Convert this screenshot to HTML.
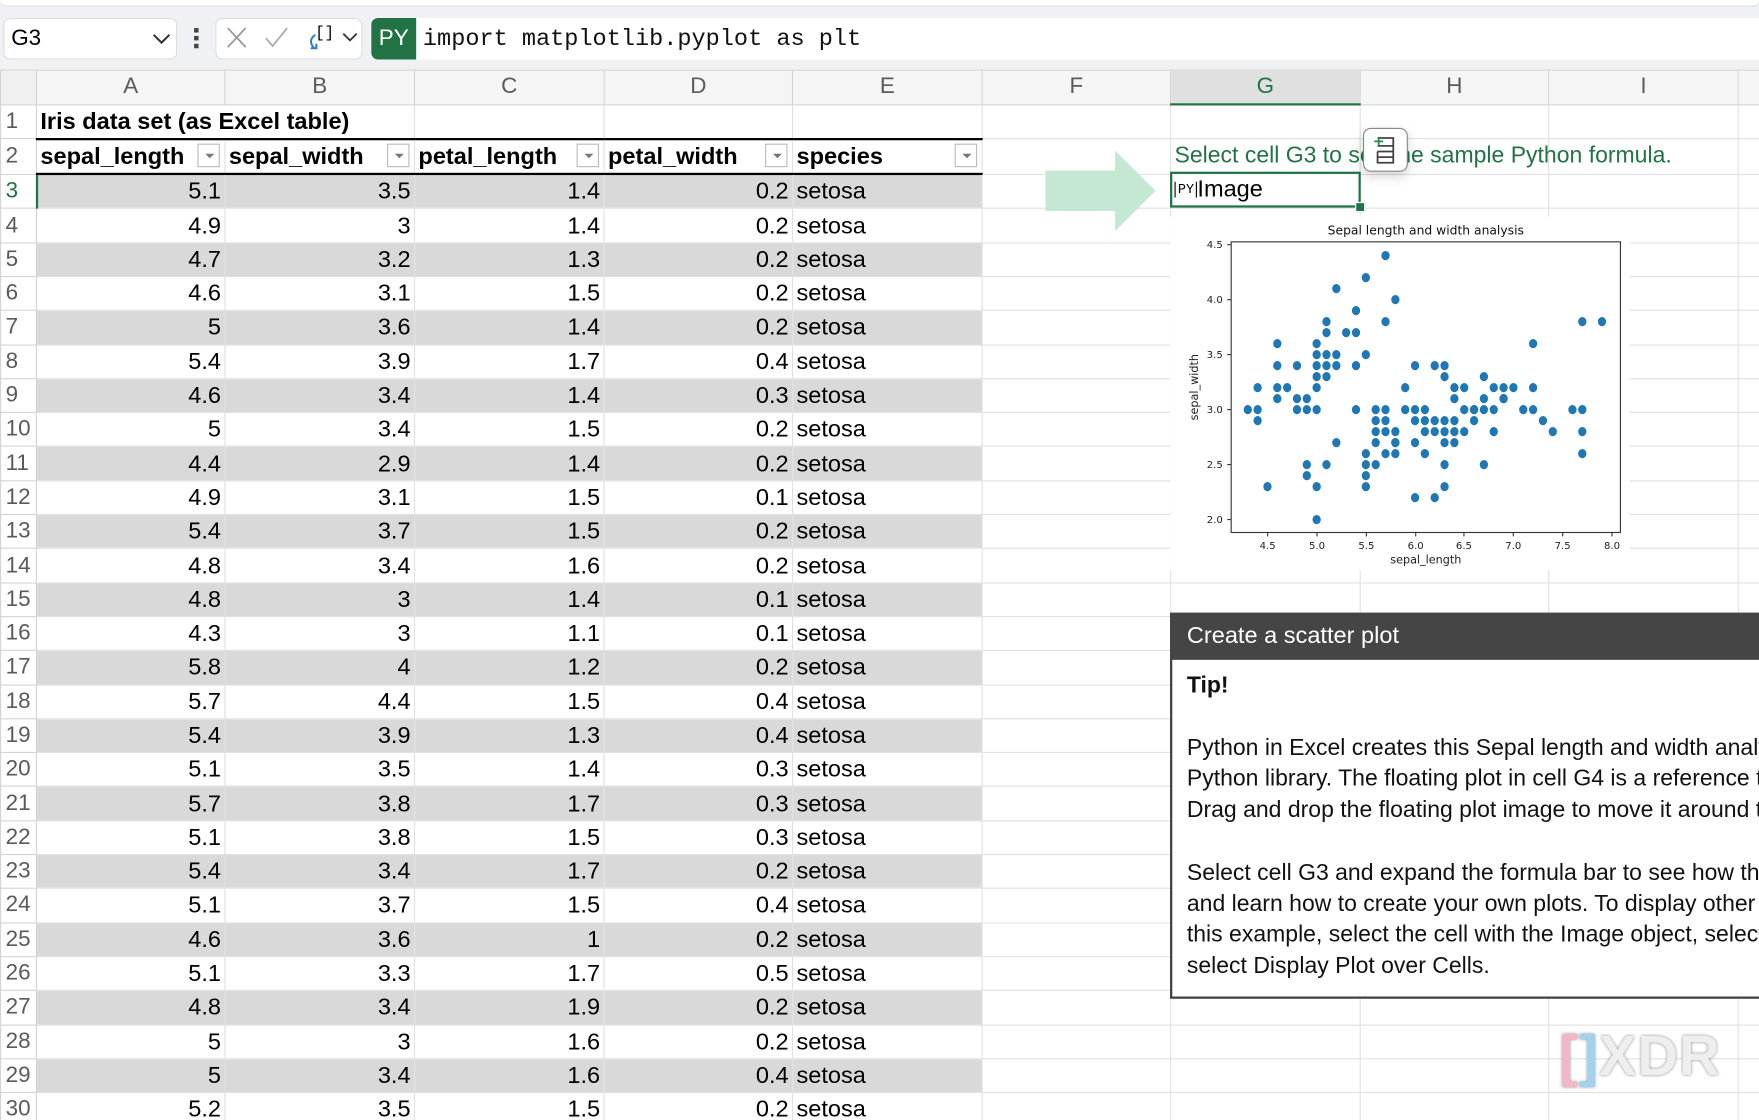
<!DOCTYPE html>
<html><head><meta charset="utf-8"><style>
html,body{margin:0;padding:0;background:#fff;overflow:hidden;}
#wrap{position:absolute;left:0;top:0;width:1568px;height:998px;transform:scale(1.1218,1.1222);transform-origin:0 0;background:#f0f1f4;overflow:hidden;font-family:"Liberation Sans Narrow","Liberation Sans",sans-serif;}
.abs{position:absolute;}
table{border-collapse:collapse;table-layout:fixed;position:absolute;left:0;top:62px;background:#fff;width:1589px;}
td{border:1px solid #e1e1e1;height:29.3px;padding:0 3px;font-size:21px;line-height:29px;white-space:nowrap;overflow:hidden;color:#000;}
td.h{color:#5a5a5a;text-align:left;padding-left:4px;font-size:20px;border-color:#d4d4d4;background:#fff;}
tr.ch td{background:#f5f5f5;text-align:center;color:#5a5a5a;font-size:20px;height:29px;border-color:#d4d4d4;}
td.n{text-align:right;}
tr.s td.t{background:#d9d9d9;}
tr.hd td.t{font-weight:bold;border-bottom:2px solid #000;border-top:2px solid #000;position:relative;}
.fb{position:absolute;right:4px;top:3px;width:20px;height:21px;border:1px solid #bbb;background:#fff;box-sizing:border-box;}
.fb:after{content:"";position:absolute;left:6px;top:8px;border-left:4px solid transparent;border-right:4px solid transparent;border-top:4px solid #777;}
</style></head><body><div id="wrap">
<div class="abs" style="left:0;top:0;width:1568px;height:5px;background:#fff;border-bottom:1px solid #dcdcdc;border-radius:0 0 8px 8px"></div>
<div class="abs" style="left:3px;top:16px;width:155px;height:37px;background:#fff;border:1px solid #dedede;border-radius:6px;box-sizing:border-box;font-family:'Liberation Sans',sans-serif;font-size:20px;line-height:35px;padding-left:6px">G3</div>
<svg class="abs" style="left:134px;top:26px" width="20" height="16"><path d="M3 5 L10 12 L17 5" stroke="#333" stroke-width="1.8" fill="none"/></svg>
<div class="abs" style="left:173px;top:25px;width:5px;height:20px"><div style="width:4px;height:4px;background:#444;margin-bottom:3px"></div><div style="width:4px;height:4px;background:#444;margin-bottom:3px"></div><div style="width:4px;height:4px;background:#444"></div></div>
<div class="abs" style="left:192px;top:16px;width:131px;height:37px;background:#fff;border:1px solid #dedede;border-radius:6px;box-sizing:border-box"></div>
<svg class="abs" style="left:192px;top:16px" width="131" height="37"><path d="M11 9 L27 26 M27 9 L11 26" stroke="#999" stroke-width="1.6"/><path d="M45 18 L51 25 L64 9" stroke="#aaa" stroke-width="1.6" fill="none"/><path d="M89 15 Q82 20 88 27 M85 27 L90 27 L90 23" stroke="#2b7cd3" stroke-width="1.8" fill="none"/><text x="89" y="17" font-family="Liberation Mono" font-size="14">[]</text><path d="M114 14 L120 20 L126 14" stroke="#333" stroke-width="1.6" fill="none"/></svg>
<div class="abs" style="left:331px;top:16px;width:1240px;height:37px;background:#fff;border-radius:6px 0 0 6px"></div>
<div class="abs" style="left:331px;top:16px;width:40px;height:37px;background:#217346;color:#fff;font-family:'Liberation Sans',sans-serif;font-size:20px;line-height:37px;text-align:center;border-radius:6px 0 0 6px">PY</div>
<div class="abs" style="left:377px;top:17px;font-family:'Liberation Mono',monospace;font-size:21px;line-height:37px;color:#111">import matplotlib.pyplot as plt</div>

<table>
<colgroup><col style="width:32px"><col style="width:168px"><col style="width:169px"><col style="width:169px"><col style="width:168px"><col style="width:169px"><col style="width:168px"><col style="width:169px"><col style="width:168px"><col style="width:169px"><col style="width:40px"></colgroup>
<tr class="ch"><td style="background:#f0f0f0"></td><td>A</td><td>B</td><td>C</td><td>D</td><td>E</td><td>F</td><td style="background:#e0e0e0;color:#217346;border-bottom:2px solid #217346">G</td><td>H</td><td>I</td><td></td></tr>
<tr><td class="h">1</td><td colspan="2" style="font-weight:bold;border-right-color:#e1e1e1">Iris data set (as Excel table)</td><td></td><td></td><td></td><td></td><td></td><td></td><td></td><td></td></tr>
<tr class="hd"><td class="h">2</td><td class="t">sepal_length<span class="fb"></span></td><td class="t">sepal_width<span class="fb"></span></td><td class="t">petal_length<span class="fb"></span></td><td class="t">petal_width<span class="fb"></span></td><td class="t">species<span class="fb"></span></td><td></td><td></td><td></td><td></td><td></td></tr>
<tr class="s"><td class="h" style="color:#217346;border-right:2px solid #217346">3</td><td class="t n">5.1</td><td class="t n">3.5</td><td class="t n">1.4</td><td class="t n">0.2</td><td class="t">setosa</td><td></td><td></td><td></td><td></td><td></td></tr>
<tr><td class="h">4</td><td class="t n">4.9</td><td class="t n">3</td><td class="t n">1.4</td><td class="t n">0.2</td><td class="t">setosa</td><td></td><td></td><td></td><td></td><td></td></tr>
<tr class="s"><td class="h">5</td><td class="t n">4.7</td><td class="t n">3.2</td><td class="t n">1.3</td><td class="t n">0.2</td><td class="t">setosa</td><td></td><td></td><td></td><td></td><td></td></tr>
<tr><td class="h">6</td><td class="t n">4.6</td><td class="t n">3.1</td><td class="t n">1.5</td><td class="t n">0.2</td><td class="t">setosa</td><td></td><td></td><td></td><td></td><td></td></tr>
<tr class="s"><td class="h">7</td><td class="t n">5</td><td class="t n">3.6</td><td class="t n">1.4</td><td class="t n">0.2</td><td class="t">setosa</td><td></td><td></td><td></td><td></td><td></td></tr>
<tr><td class="h">8</td><td class="t n">5.4</td><td class="t n">3.9</td><td class="t n">1.7</td><td class="t n">0.4</td><td class="t">setosa</td><td></td><td></td><td></td><td></td><td></td></tr>
<tr class="s"><td class="h">9</td><td class="t n">4.6</td><td class="t n">3.4</td><td class="t n">1.4</td><td class="t n">0.3</td><td class="t">setosa</td><td></td><td></td><td></td><td></td><td></td></tr>
<tr><td class="h">10</td><td class="t n">5</td><td class="t n">3.4</td><td class="t n">1.5</td><td class="t n">0.2</td><td class="t">setosa</td><td></td><td></td><td></td><td></td><td></td></tr>
<tr class="s"><td class="h">11</td><td class="t n">4.4</td><td class="t n">2.9</td><td class="t n">1.4</td><td class="t n">0.2</td><td class="t">setosa</td><td></td><td></td><td></td><td></td><td></td></tr>
<tr><td class="h">12</td><td class="t n">4.9</td><td class="t n">3.1</td><td class="t n">1.5</td><td class="t n">0.1</td><td class="t">setosa</td><td></td><td></td><td></td><td></td><td></td></tr>
<tr class="s"><td class="h">13</td><td class="t n">5.4</td><td class="t n">3.7</td><td class="t n">1.5</td><td class="t n">0.2</td><td class="t">setosa</td><td></td><td></td><td></td><td></td><td></td></tr>
<tr><td class="h">14</td><td class="t n">4.8</td><td class="t n">3.4</td><td class="t n">1.6</td><td class="t n">0.2</td><td class="t">setosa</td><td></td><td></td><td></td><td></td><td></td></tr>
<tr class="s"><td class="h">15</td><td class="t n">4.8</td><td class="t n">3</td><td class="t n">1.4</td><td class="t n">0.1</td><td class="t">setosa</td><td></td><td></td><td></td><td></td><td></td></tr>
<tr><td class="h">16</td><td class="t n">4.3</td><td class="t n">3</td><td class="t n">1.1</td><td class="t n">0.1</td><td class="t">setosa</td><td></td><td></td><td></td><td></td><td></td></tr>
<tr class="s"><td class="h">17</td><td class="t n">5.8</td><td class="t n">4</td><td class="t n">1.2</td><td class="t n">0.2</td><td class="t">setosa</td><td></td><td></td><td></td><td></td><td></td></tr>
<tr><td class="h">18</td><td class="t n">5.7</td><td class="t n">4.4</td><td class="t n">1.5</td><td class="t n">0.4</td><td class="t">setosa</td><td></td><td></td><td></td><td></td><td></td></tr>
<tr class="s"><td class="h">19</td><td class="t n">5.4</td><td class="t n">3.9</td><td class="t n">1.3</td><td class="t n">0.4</td><td class="t">setosa</td><td></td><td></td><td></td><td></td><td></td></tr>
<tr><td class="h">20</td><td class="t n">5.1</td><td class="t n">3.5</td><td class="t n">1.4</td><td class="t n">0.3</td><td class="t">setosa</td><td></td><td></td><td></td><td></td><td></td></tr>
<tr class="s"><td class="h">21</td><td class="t n">5.7</td><td class="t n">3.8</td><td class="t n">1.7</td><td class="t n">0.3</td><td class="t">setosa</td><td></td><td></td><td></td><td></td><td></td></tr>
<tr><td class="h">22</td><td class="t n">5.1</td><td class="t n">3.8</td><td class="t n">1.5</td><td class="t n">0.3</td><td class="t">setosa</td><td></td><td></td><td></td><td></td><td></td></tr>
<tr class="s"><td class="h">23</td><td class="t n">5.4</td><td class="t n">3.4</td><td class="t n">1.7</td><td class="t n">0.2</td><td class="t">setosa</td><td></td><td></td><td></td><td></td><td></td></tr>
<tr><td class="h">24</td><td class="t n">5.1</td><td class="t n">3.7</td><td class="t n">1.5</td><td class="t n">0.4</td><td class="t">setosa</td><td></td><td></td><td></td><td></td><td></td></tr>
<tr class="s"><td class="h">25</td><td class="t n">4.6</td><td class="t n">3.6</td><td class="t n">1</td><td class="t n">0.2</td><td class="t">setosa</td><td></td><td></td><td></td><td></td><td></td></tr>
<tr><td class="h">26</td><td class="t n">5.1</td><td class="t n">3.3</td><td class="t n">1.7</td><td class="t n">0.5</td><td class="t">setosa</td><td></td><td></td><td></td><td></td><td></td></tr>
<tr class="s"><td class="h">27</td><td class="t n">4.8</td><td class="t n">3.4</td><td class="t n">1.9</td><td class="t n">0.2</td><td class="t">setosa</td><td></td><td></td><td></td><td></td><td></td></tr>
<tr><td class="h">28</td><td class="t n">5</td><td class="t n">3</td><td class="t n">1.6</td><td class="t n">0.2</td><td class="t">setosa</td><td></td><td></td><td></td><td></td><td></td></tr>
<tr class="s"><td class="h">29</td><td class="t n">5</td><td class="t n">3.4</td><td class="t n">1.6</td><td class="t n">0.4</td><td class="t">setosa</td><td></td><td></td><td></td><td></td><td></td></tr>
<tr><td class="h">30</td><td class="t n">5.2</td><td class="t n">3.5</td><td class="t n">1.5</td><td class="t n">0.2</td><td class="t">setosa</td><td></td><td></td><td></td><td></td><td></td></tr>
</table>

<svg class="abs" style="left:930px;top:134px" width="102" height="72"><path d="M2 18 H64 V0 L100 36 L64 72 V54 H2 Z" fill="#c4e8d3"/></svg>
<div class="abs" style="left:1047px;top:124px;font-family:'Liberation Sans',sans-serif;font-size:20.5px;line-height:30px;color:#217346;white-space:nowrap">Select cell G3 to see the sample Python formula.</div>
<div class="abs" style="left:1043px;top:153px;width:170px;height:32px;border:2px solid #217346;box-sizing:border-box;background:#fff"></div>
<div class="abs" style="left:1208px;top:180px;width:7px;height:7px;background:#217346;border:1px solid #fff"></div>
<div class="abs" style="left:1047px;top:154px;font-size:21px;line-height:30px;white-space:nowrap"><span style="font-family:'Liberation Mono';font-size:12px;border-left:1.5px solid #000;border-right:1.5px solid #000;padding:0 2px;position:relative;top:-3px">PY</span><span style="font-family:'Liberation Sans';font-size:21px">Image</span></div>
<div class="abs" style="left:1215px;top:114px;width:40px;height:39px;background:#fff;border:1px solid #888;border-radius:7px;box-sizing:border-box;box-shadow:0 4px 10px rgba(0,0,0,.18)"><svg width="40" height="39"><path d="M12 8 H26 V30 H12 V20 M12 15 H26 M12 20 H26 M12 25 H26" stroke="#444" stroke-width="1.6" fill="none"/><path d="M9 11 H17 M13 7 V15" stroke="#2a8a4a" stroke-width="1.6"/></svg></div>

<svg class="abs" style="left:1043px;top:193px" width="410" height="315" font-family="DejaVu Sans,sans-serif">
<rect x="0" y="0" width="410" height="315" fill="#fff"/>
<text x="228" y="16" font-size="11" text-anchor="middle" fill="#111">Sepal length and width analysis</text>
<rect x="54.5" y="22.5" width="347" height="259" fill="none" stroke="#333" stroke-width="1"/>
<g font-size="9" fill="#222" text-anchor="end">
<text x="47" y="28">4.5</text><text x="47" y="77">4.0</text><text x="47" y="126">3.5</text><text x="47" y="175">3.0</text><text x="47" y="224">2.5</text><text x="47" y="273">2.0</text></g>
<g stroke="#333"><path d="M51 25H54M51 74H54M51 123H54M51 172H54M51 221H54M51 270H54M87 282V285M131 282V285M175 282V285M219 282V285M262 282V285M306 282V285M350 282V285M394 282V285"/></g>
<g font-size="9" fill="#222" text-anchor="middle"><text x="87" y="296">4.5</text><text x="131" y="296">5.0</text><text x="175" y="296">5.5</text><text x="219" y="296">6.0</text><text x="262" y="296">6.5</text><text x="306" y="296">7.0</text><text x="350" y="296">7.5</text><text x="394" y="296">8.0</text></g>
<text x="228" y="309" font-size="10" text-anchor="middle" fill="#222">sepal_length</text>
<text transform="translate(25 152) rotate(-90)" font-size="10" text-anchor="middle" fill="#222">sepal_width</text>
<g transform="matrix(87.7 0 0 -98 -307.8 466)" fill="#1f77b4">
<circle cx="5.1" cy="3.5" r="0.042"/><circle cx="4.9" cy="3" r="0.042"/><circle cx="4.7" cy="3.2" r="0.042"/><circle cx="4.6" cy="3.1" r="0.042"/><circle cx="5" cy="3.6" r="0.042"/><circle cx="5.4" cy="3.9" r="0.042"/><circle cx="4.6" cy="3.4" r="0.042"/><circle cx="5" cy="3.4" r="0.042"/><circle cx="4.4" cy="2.9" r="0.042"/><circle cx="4.9" cy="3.1" r="0.042"/><circle cx="5.4" cy="3.7" r="0.042"/><circle cx="4.8" cy="3.4" r="0.042"/><circle cx="4.8" cy="3" r="0.042"/><circle cx="4.3" cy="3" r="0.042"/><circle cx="5.8" cy="4" r="0.042"/><circle cx="5.7" cy="4.4" r="0.042"/><circle cx="5.7" cy="3.8" r="0.042"/><circle cx="5.1" cy="3.8" r="0.042"/><circle cx="5.4" cy="3.4" r="0.042"/><circle cx="5.1" cy="3.7" r="0.042"/><circle cx="4.6" cy="3.6" r="0.042"/><circle cx="5.1" cy="3.3" r="0.042"/><circle cx="5" cy="3" r="0.042"/><circle cx="5.2" cy="3.5" r="0.042"/><circle cx="5.2" cy="3.4" r="0.042"/><circle cx="4.8" cy="3.1" r="0.042"/><circle cx="5.2" cy="4.1" r="0.042"/><circle cx="5.5" cy="4.2" r="0.042"/><circle cx="5" cy="3.2" r="0.042"/><circle cx="5.5" cy="3.5" r="0.042"/><circle cx="4.4" cy="3" r="0.042"/><circle cx="5.1" cy="3.4" r="0.042"/><circle cx="5" cy="3.5" r="0.042"/><circle cx="4.5" cy="2.3" r="0.042"/><circle cx="4.4" cy="3.2" r="0.042"/><circle cx="4.6" cy="3.2" r="0.042"/><circle cx="5.3" cy="3.7" r="0.042"/><circle cx="5" cy="3.3" r="0.042"/>
<circle cx="7" cy="3.2" r="0.042"/><circle cx="6.4" cy="3.2" r="0.042"/><circle cx="6.9" cy="3.1" r="0.042"/><circle cx="5.5" cy="2.3" r="0.042"/><circle cx="6.5" cy="2.8" r="0.042"/><circle cx="5.7" cy="2.8" r="0.042"/><circle cx="6.3" cy="3.3" r="0.042"/><circle cx="4.9" cy="2.4" r="0.042"/><circle cx="6.6" cy="2.9" r="0.042"/><circle cx="5.2" cy="2.7" r="0.042"/><circle cx="5" cy="2" r="0.042"/><circle cx="5.9" cy="3" r="0.042"/><circle cx="6" cy="2.2" r="0.042"/><circle cx="6.1" cy="2.9" r="0.042"/><circle cx="5.6" cy="2.9" r="0.042"/><circle cx="6.7" cy="3.1" r="0.042"/><circle cx="5.6" cy="3" r="0.042"/><circle cx="5.8" cy="2.7" r="0.042"/><circle cx="6.2" cy="2.2" r="0.042"/><circle cx="5.6" cy="2.5" r="0.042"/><circle cx="5.9" cy="3.2" r="0.042"/><circle cx="6.1" cy="2.8" r="0.042"/><circle cx="6.3" cy="2.5" r="0.042"/><circle cx="6.4" cy="2.9" r="0.042"/><circle cx="6.6" cy="3" r="0.042"/><circle cx="6.8" cy="2.8" r="0.042"/><circle cx="6.7" cy="3" r="0.042"/><circle cx="6" cy="2.9" r="0.042"/><circle cx="5.7" cy="2.6" r="0.042"/><circle cx="5.5" cy="2.4" r="0.042"/><circle cx="5.8" cy="2.7" r="0.042"/><circle cx="6" cy="2.7" r="0.042"/><circle cx="5.4" cy="3" r="0.042"/><circle cx="6" cy="3.4" r="0.042"/><circle cx="6.3" cy="2.3" r="0.042"/><circle cx="5.5" cy="2.5" r="0.042"/><circle cx="5.5" cy="2.6" r="0.042"/><circle cx="6.1" cy="3" r="0.042"/><circle cx="5.8" cy="2.6" r="0.042"/><circle cx="5" cy="2.3" r="0.042"/><circle cx="5.6" cy="2.7" r="0.042"/><circle cx="5.7" cy="3" r="0.042"/><circle cx="5.7" cy="2.9" r="0.042"/><circle cx="6.2" cy="2.9" r="0.042"/><circle cx="5.1" cy="2.5" r="0.042"/>
<circle cx="7.1" cy="3" r="0.042"/><circle cx="6.3" cy="2.9" r="0.042"/><circle cx="6.5" cy="3" r="0.042"/><circle cx="7.6" cy="3" r="0.042"/><circle cx="7.3" cy="2.9" r="0.042"/><circle cx="6.7" cy="2.5" r="0.042"/><circle cx="7.2" cy="3.6" r="0.042"/><circle cx="6.5" cy="3.2" r="0.042"/><circle cx="6.4" cy="2.7" r="0.042"/><circle cx="6.8" cy="3" r="0.042"/><circle cx="5.8" cy="2.8" r="0.042"/><circle cx="7.7" cy="3.8" r="0.042"/><circle cx="7.7" cy="2.6" r="0.042"/><circle cx="6.9" cy="3.2" r="0.042"/><circle cx="5.6" cy="2.8" r="0.042"/><circle cx="7.7" cy="2.8" r="0.042"/><circle cx="6.3" cy="2.7" r="0.042"/><circle cx="6.7" cy="3.3" r="0.042"/><circle cx="7.2" cy="3.2" r="0.042"/><circle cx="6.2" cy="2.8" r="0.042"/><circle cx="6.4" cy="2.8" r="0.042"/><circle cx="7.2" cy="3" r="0.042"/><circle cx="7.4" cy="2.8" r="0.042"/><circle cx="7.9" cy="3.8" r="0.042"/><circle cx="6.3" cy="2.8" r="0.042"/><circle cx="6.1" cy="2.6" r="0.042"/><circle cx="7.7" cy="3" r="0.042"/><circle cx="6.3" cy="3.4" r="0.042"/><circle cx="6.4" cy="3.1" r="0.042"/><circle cx="6" cy="3" r="0.042"/><circle cx="6.9" cy="3.1" r="0.042"/><circle cx="6.8" cy="3.2" r="0.042"/><circle cx="6.2" cy="3.4" r="0.042"/><circle cx="4.9" cy="2.5" r="0.042"/><circle cx="6.6" cy="3" r="0.042"/>
</g>
</svg>

<div class="abs" style="left:1043px;top:546px;width:540px;height:344px;background:#fff;border:2px solid #404040;box-sizing:border-box"></div>
<div class="abs" style="left:1043px;top:546px;width:540px;height:42px;background:#454545;color:#fff;font-size:21px;line-height:42px;padding-left:15px;box-sizing:border-box">Create a scatter plot</div>
<div class="abs" style="left:1058px;top:597px;width:510px;font-size:20.5px;line-height:27.8px;color:#111;white-space:nowrap;overflow:hidden">
<div style="font-weight:bold">Tip!</div><div>&nbsp;</div>
<div>Python in Excel creates this Sepal length and width analysis</div>
<div>Python library. The floating plot in cell G4 is a reference to</div>
<div>Drag and drop the floating plot image to move it around the</div><div>&nbsp;</div>
<div>Select cell G3 and expand the formula bar to see how the</div>
<div>and learn how to create your own plots. To display other plots</div>
<div>this example, select the cell with the Image object, select</div>
<div>select Display Plot over Cells.</div>
</div>
<div class="abs" style="left:1390px;top:914px;font-family:'Liberation Sans',sans-serif;font-size:50px;font-weight:bold;color:#eee;text-shadow:0 0 3px #888;letter-spacing:1px;white-space:nowrap;line-height:54px"><span style="color:#f4b6c6">[</span><span style="color:#9fd3f0">]</span>XDR</div>
</div></body></html>
